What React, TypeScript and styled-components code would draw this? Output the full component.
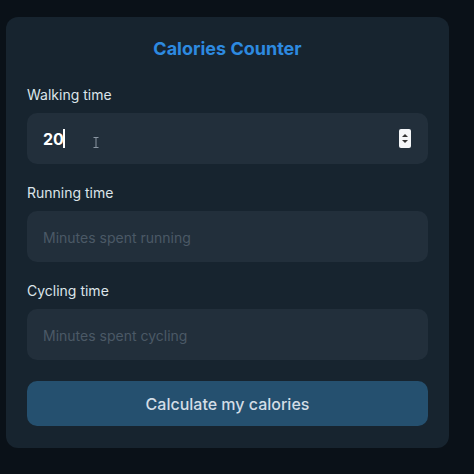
import React, { useState } from 'react';
import styled, { createGlobalStyle } from 'styled-components';

// --- 데이터 ---
interface Field {
  id: string;
  label: string;
  placeholder: string;
}

const FIELDS: Field[] = [
  { id: 'walking', label: 'Walking time', placeholder: 'Minutes spent walking' },
  { id: 'running', label: 'Running time', placeholder: 'Minutes spent running' },
  { id: 'cycling', label: 'Cycling time', placeholder: 'Minutes spent cycling' },
];

// --- 스타일 ---
const GlobalStyle = createGlobalStyle`
  html, body {
    margin: 0;
    background-color: #0a1118;
    font-family: Inter, 'Noto Sans', sans-serif;
  }
`;

const Page = styled.div`
  min-height: 474px;
  padding: 17px 0 0 6px;
  box-sizing: border-box;
`;

const Card = styled.form`
  width: 443px;
  background-color: #17242f;
  border-radius: 12px;
  padding: 21px 21px 22px;
  box-sizing: border-box;
  display: flex;
  flex-direction: column;
`;

const Title = styled.h1`
  margin: 0 0 25px;
  text-align: center;
  font-size: 18px;
  line-height: 22px;
  font-weight: 700;
  color: #2d8ae0;
`;

const Group = styled.div`
  display: flex;
  flex-direction: column;
  gap: 8px;
  margin-bottom: 19px;
`;

const Label = styled.label`
  font-size: 14px;
  line-height: 20px;
  color: #dce4ea;
`;

const InputWrap = styled.div`
  position: relative;
`;

const Input = styled.input`
  width: 100%;
  height: 51px;
  box-sizing: border-box;
  border: none;
  outline: none;
  border-radius: 10px;
  background-color: #222f3b;
  padding: 0 16px;
  font-family: Inter, 'Noto Sans', sans-serif;
  font-size: 16px;
  font-weight: 700;
  color: #ffffff;
  caret-color: #ffffff;
  -moz-appearance: textfield;

  &::-webkit-inner-spin-button,
  &::-webkit-outer-spin-button {
    -webkit-appearance: none;
    margin: 0;
  }

  &::placeholder {
    font-size: 14px;
    font-weight: 400;
    color: #4b5966;
  }
`;

const Caret = styled.span`
  position: absolute;
  left: 36px;
  top: 16px;
  width: 1.5px;
  height: 19px;
  background-color: #ffffff;
  pointer-events: none;
`;

const Spinner = styled.div`
  position: absolute;
  right: 17px;
  top: 16px;
  width: 12px;
  height: 19px;
  background-color: #f4f6f8;
  border-radius: 2px;
  display: flex;
  align-items: center;
  justify-content: center;
`;

const Pointer = styled.div`
  position: absolute;
  left: 66px;
  top: 19px;
  pointer-events: none;
`;

const SubmitButton = styled.button`
  margin-top: 2px;
  height: 45px;
  border: none;
  border-radius: 10px;
  background-color: #25506f;
  color: #d3dde6;
  font-family: Inter, 'Noto Sans', sans-serif;
  font-size: 16px;
  font-weight: 500;
  cursor: pointer;
`;

// --- 컴포넌트 ---
const App: React.FC = () => {
  const [values, setValues] = useState<Record<string, string>>({ walking: '20' });

  return (
    <Page>
      <GlobalStyle />
      <Card onSubmit={(e) => e.preventDefault()}>
        <Title>Calories Counter</Title>

        {FIELDS.map((f, i) => (
          <Group key={f.id}>
            <Label htmlFor={f.id}>{f.label}</Label>
            <InputWrap>
              <Input
                id={f.id}
                type="number"
                placeholder={f.placeholder}
                value={values[f.id] ?? ''}
                onChange={(e) => setValues({ ...values, [f.id]: e.target.value })}
              />
              {i === 0 && (
                <>
                  <Caret />
                  <Spinner>
                    <svg width="8" height="13" viewBox="0 0 8 13">
                      <path d="M1 5 L4 2 L7 5 Z" fill="#333" />
                      <path d="M1 8 L4 11 L7 8 Z" fill="#333" />
                    </svg>
                  </Spinner>
                  <Pointer>
                    <svg width="6" height="11" viewBox="0 0 6 11">
                      <path d="M0.5 0.5 H5.5 M3 0.5 V10.5 M0.5 10.5 H5.5" stroke="#8a96a2" strokeWidth="1" fill="none" />
                    </svg>
                  </Pointer>
                </>
              )}
            </InputWrap>
          </Group>
        ))}

        <SubmitButton type="submit">Calculate my calories</SubmitButton>
      </Card>
    </Page>
  );
};

export default App;
